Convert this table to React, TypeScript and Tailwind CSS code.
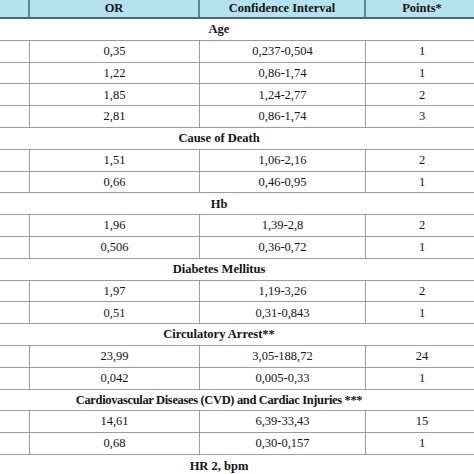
type Row =
  | { kind: "section"; label: string; tight?: boolean }
  | { kind: "data"; or: string; ci: string; pts: string };

const rows: Row[] = [
  { kind: "section", label: "Age" },
  { kind: "data", or: "0,35", ci: "0,237-0,504", pts: "1" },
  { kind: "data", or: "1,22", ci: "0,86-1,74", pts: "1" },
  { kind: "data", or: "1,85", ci: "1,24-2,77", pts: "2" },
  { kind: "data", or: "2,81", ci: "0,86-1,74", pts: "3" },
  { kind: "section", label: "Cause of Death" },
  { kind: "data", or: "1,51", ci: "1,06-2,16", pts: "2" },
  { kind: "data", or: "0,66", ci: "0,46-0,95", pts: "1" },
  { kind: "section", label: "Hb" },
  { kind: "data", or: "1,96", ci: "1,39-2,8", pts: "2" },
  { kind: "data", or: "0,506", ci: "0,36-0,72", pts: "1" },
  { kind: "section", label: "Diabetes Mellitus" },
  { kind: "data", or: "1,97", ci: "1,19-3,26", pts: "2" },
  { kind: "data", or: "0,51", ci: "0,31-0,843", pts: "1" },
  { kind: "section", label: "Circulatory Arrest**" },
  { kind: "data", or: "23,99", ci: "3,05-188,72", pts: "24" },
  { kind: "data", or: "0,042", ci: "0,005-0,33", pts: "1" },
  { kind: "section", label: "Cardiovascular Diseases (CVD) and Cardiac Injuries ***", tight: true },
  { kind: "data", or: "14,61", ci: "6,39-33,43", pts: "15" },
  { kind: "data", or: "0,68", ci: "0,30-0,157", pts: "1" },
  { kind: "section", label: "HR 2, bpm" },
];

const cols = "grid grid-cols-[70px_170px_166px_112px]";

export default function App() {
  return (
    <div
      className="w-[474px] h-[474px] overflow-hidden bg-white text-[#141414] text-[12.5px]"
      style={{ fontFamily: '"Liberation Serif", "Times New Roman", serif' }}
    >
      <div className="ml-[-40px] w-[518px]">
        {/* Header */}
        <div className={`${cols} h-[19px] bg-[#b6e2f0] border-b-2 border-[#4d6770] font-bold`}>
          <div className="border-r-2 border-[#5b8593]" />
          <div className="flex items-center justify-center border-r-2 border-[#5b8593] leading-none">OR</div>
          <div className="flex items-center justify-center border-r-2 border-[#5b8593] leading-none">Confidence Interval</div>
          <div className="flex items-center justify-center leading-none">Points*</div>
        </div>

        {rows.map((r, i) =>
          r.kind === "section" ? (
            <div
              key={i}
              className={`h-[21.8px] flex items-center justify-center font-bold leading-none ${
                r.tight ? "tracking-[-0.35px]" : ""
              } ${i === rows.length - 1 ? "" : "border-b-[1.5px] border-[#9c9c9c]"}`}
            >
              {r.label}
            </div>
          ) : (
            <div key={i} className={`${cols} h-[21.8px] border-b-[1.5px] border-[#9c9c9c] leading-none`}>
              <div className="border-r-[1.5px] border-[#9c9c9c]" />
              <div className="flex items-center justify-center border-r-[1.5px] border-[#9c9c9c]">{r.or}</div>
              <div className="flex items-center justify-center border-r-[1.5px] border-[#9c9c9c]">{r.ci}</div>
              <div className="flex items-center justify-center">{r.pts}</div>
            </div>
          )
        )}
      </div>
    </div>
  );
}
